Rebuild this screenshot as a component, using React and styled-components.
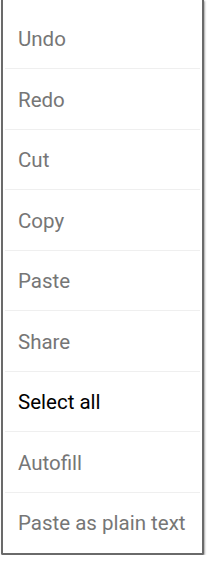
import React from "react";
import styled, { createGlobalStyle } from "styled-components";

const GlobalStyle = createGlobalStyle`
  html, body {
    margin: 0;
    padding: 0;
    background: #ffffff;
  }
  body {
    font-family: Roboto, "Noto Sans", sans-serif;
    overflow: hidden;
  }
`;

const Menu = styled.ul`
  list-style: none;
  margin: 0 0 0 1px;
  padding: 8.5px 0 0;
  width: 199px;
  background: #fff;
  border: 2px solid #6a6a6a;
  border-top: none;
  border-radius: 0 0 2px 2px;
  box-shadow: 1px 1px 2px rgba(0, 0, 0, 0.35);
`;

const Item = styled.li`
  box-sizing: border-box;
  height: 60.5px;
  display: flex;
  align-items: center;
  padding: 2px 0 0 13px;
  margin: 0 2px;
  font-size: 20.5px;
  color: ${(p) => (p.$active ? "#000000" : "#767676")};
  border-bottom: 1px solid ${(p) => (p.$last ? "transparent" : "#efefef")};
  white-space: nowrap;
`;

const items = [
  "Undo",
  "Redo",
  "Cut",
  "Copy",
  "Paste",
  "Share",
  "Select all",
  "Autofill",
  "Paste as plain text",
];

export default function App() {
  return (
    <>
      <GlobalStyle />
      <Menu>
        {items.map((label, i) => (
          <Item
            key={label}
            $active={label === "Select all"}
            $last={i === items.length - 1}
          >
            {label}
          </Item>
        ))}
      </Menu>
    </>
  );
}
